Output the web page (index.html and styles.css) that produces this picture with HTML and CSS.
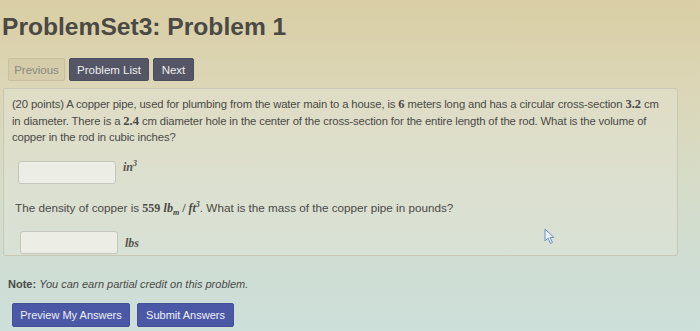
FILE: index.html
```html
<!DOCTYPE html>
<html>
<head>
<meta charset="utf-8">
<link rel="stylesheet" href="styles.css">
</head>
<body>
<div class="page">
  <h1 class="title">ProblemSet3: Problem 1</h1>
  <div class="nav">
    <span class="btn btn-disabled">Previous</span>
    <span class="btn btn-dark">Problem List</span>
    <span class="btn btn-dark">Next</span>
  </div>
  <div class="problem">
    <p class="text">(20 points) A copper pipe, used for plumbing from the water main to a house, is <span class="m">6</span> meters long and has a circular cross-section <span class="m">3.2</span> cm in diameter. There is a <span class="m">2.4</span> cm diameter hole in the center of the cross-section for the entire length of the rod. What is the volume of copper in the rod in cubic inches?</p>
    <div class="answer"><span class="input"></span><span class="unit">in<sup>3</sup></span></div>
    <p class="text second">The density of copper is <span class="mr">559</span> <span class="unit-inline">lb<sub>m</sub></span><span class="mr"> / </span><span class="unit-inline">ft<sup>3</sup></span>. What is the mass of the copper pipe in pounds?</p>
    <div class="answer a2"><span class="input"></span><span class="unit">lbs</span></div>
    <svg class="cursor" width="12" height="17" viewBox="0 0 12 17"><path d="M1 1 L1 13 L4 10 L6.5 15.5 L8.5 14.5 L6 9.5 L10 9.5 Z" fill="#e8eef6" stroke="#6d8fc4" stroke-width="1"/></svg>
  </div>
  <p class="note"><b>Note:</b> <i>You can earn partial credit on this problem.</i></p>
  <div class="actions">
    <span class="btn btn-blue">Preview My Answers</span>
    <span class="btn btn-blue">Submit Answers</span>
  </div>
</div>
</body>
</html>
```
FILE: styles.css
```css
html, body {
  margin: 0;
  padding: 0;
}
body {
  width: 700px;
  height: 331px;
  overflow: hidden;
  font-family: "Liberation Sans", Arial, sans-serif;
  color: #4a4a46;
  background: linear-gradient(180deg, #d9cea4 0%, #dcd6b6 25%, #d6dcc8 55%, #cfddd3 80%, #cde0da 100%);
}
.page {
  padding: 12px 0 0 0;
}
.title {
  margin: 0 0 0 2px;
  font-size: 24.6px;
  line-height: 30px;
  font-weight: bold;
  color: #4a4944;
}
.nav {
  display: flex;
  gap: 4px;
  margin: 16px 0 0 8px;
}
.btn {
  display: inline-flex;
  align-items: center;
  justify-content: center;
  font-size: 11.5px;
  border-radius: 2px;
  height: 23px;
  box-sizing: border-box;
  white-space: nowrap;
}
.btn-disabled {
  width: 57px;
  background: #d5ccaa;
  color: #8b8a80;
  border: 1px solid #c8c0a0;
}
.btn-dark {
  background: #545666;
  color: #eceef0;
  padding: 0 4px;
  border: 1px solid #4c4e5c;
}
.nav .btn-dark:nth-child(2) { width: 80px; }
.nav .btn-dark:nth-child(3) { width: 41px; }
.problem {
  position: relative;
  margin: 7px 22px 0 3px;
  height: 168px;
  box-sizing: border-box;
  border: 1px solid #c9c8b6;
  border-radius: 2px;
  background: rgba(232, 232, 220, 0.35);
  padding: 7px 8px 0 8px;
}
.text {
  margin: 0;
  font-size: 11.3px;
  line-height: 16.5px;
  letter-spacing: -0.14px;
  color: #4a4a46;
}
.m, .mr, .unit-inline {
  line-height: 1;
  letter-spacing: 0;
  font-family: "Liberation Serif", serif;
  font-weight: bold;
}
.m { font-size: 12.5px; }
.mr { font-size: 12px; }
.unit-inline {
  font-style: italic;
  font-size: 12px;
}
.unit-inline sub, .unit-inline sup, .unit sup {
  font-size: 8px;
  line-height: 0;
}
.answer {
  display: flex;
  align-items: center;
  margin: 15px 0 0 6px;
  height: 23px;
}
.input {
  width: 98px;
  height: 23px;
  box-sizing: border-box;
  background: #eceee6;
  border: 1px solid #c4c6bc;
  border-radius: 3px;
}
.unit {
  margin-left: 7px;
  font-family: "Liberation Serif", serif;
  font-style: italic;
  font-weight: bold;
  font-size: 12px;
  color: #55554f;
  position: relative;
  top: -5px;
}
.a2 .unit { top: 1px; }
.second {
  margin-top: 16px;
  padding-left: 3px;
  font-size: 11.7px;
  letter-spacing: 0;
}
.a2 {
  margin-top: 15px;
  margin-left: 8px;
}
.cursor {
  position: absolute;
  left: 540px;
  top: 139px;
}
.note {
  margin: 22px 0 0 8px;
  font-size: 11px;
  color: #4a4a46;
}
.note b { color: #4a4a44; }
.actions {
  display: flex;
  gap: 7px;
  margin: 13px 0 0 12px;
}
.btn-blue {
  background: #4b58a6;
  color: #eef0f8;
  border: 1px solid #434f98;
  height: 24px;
  font-size: 11px;
}
.actions .btn-blue:nth-child(1) { width: 118px; }
.actions .btn-blue:nth-child(2) { width: 97px; }
```
